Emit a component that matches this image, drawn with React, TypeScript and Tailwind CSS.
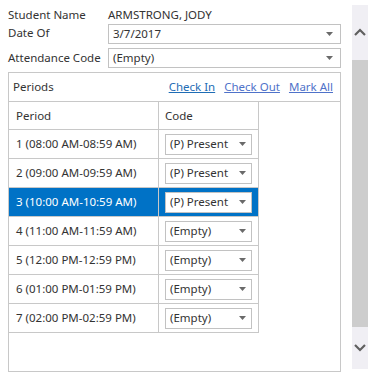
import React from "react";

const Arrow = () => (
  <svg width="7" height="4" viewBox="0 0 7 4" className="shrink-0">
    <path d="M0 0H7L3.5 4Z" fill="#6a6a6a" />
  </svg>
);

const Select = ({ value }: { value: string }) => (
  <div className="flex h-[21px] w-[87px] items-center justify-between border border-[#c2c2c2] bg-white pl-[4px] pr-[5px] text-[#333]">
    <span>{value}</span>
    <Arrow />
  </div>
);

const rows = [
  ["1 (08:00 AM-08:59 AM)", "(P) Present"],
  ["2 (09:00 AM-09:59 AM)", "(P) Present"],
  ["3 (10:00 AM-10:59 AM)", "(P) Present"],
  ["4 (11:00 AM-11:59 AM)", "(Empty)"],
  ["5 (12:00 PM-12:59 PM)", "(Empty)"],
  ["6 (01:00 PM-01:59 PM)", "(Empty)"],
  ["7 (02:00 PM-02:59 PM)", "(Empty)"],
];

export default function App() {
  return (
    <div
      className="flex h-[375px] w-[368px] overflow-hidden bg-white text-[11.5px] text-[#333]"
      style={{ fontFamily: '"Noto Sans", "Open Sans", sans-serif' }}
    >
      <div className="flex w-[352px] flex-col pl-[8px] pt-[5px]">
        <div className="flex h-[19px] items-center">
          <div className="w-[100px]">Student Name</div>
          <div>ARMSTRONG, JODY</div>
        </div>
        <div className="flex h-[20px] items-center">
          <div className="w-[100px] self-start leading-[17px]">Date Of</div>
          <div className="flex h-[20px] w-[233px] items-center justify-between border border-[#c2c2c2] pl-[4px] pr-[7px]">
            <span>3/7/2017</span>
            <Arrow />
          </div>
        </div>
        <div className="mt-[4px] flex h-[20px] items-center">
          <div className="w-[100px]">Attendance Code</div>
          <div className="flex h-[20px] w-[233px] items-center justify-between border border-[#c2c2c2] pl-[4px] pr-[7px]">
            <span>(Empty)</span>
            <Arrow />
          </div>
        </div>
        <div className="mt-[4px] flex h-[300px] w-[333px] flex-col border border-[#c8c8c8]">
          <div className="flex h-[29px] items-center justify-between border-b border-[#c8c8c8] pl-[4px] pr-[7px]">
            <span>Periods</span>
            <div className="flex gap-[9px]">
              <span className="text-[#1f6db5] underline">Check In</span>
              <span className="text-[#4f72c9] underline">Check Out</span>
              <span className="text-[#4f72c9] underline">Mark All</span>
            </div>
          </div>
          <div className="w-[250px]">
            <div className="flex h-[28px] border-b border-r border-[#c8c8c8]">
              <div className="flex w-[150px] items-center border-r border-[#c8c8c8] pl-[7px]">Period</div>
              <div className="flex items-center pl-[6px]">Code</div>
            </div>
            {rows.map(([p, c], i) => {
              const sel = i === 2;
              return (
                <div
                  key={p}
                  className={
                    sel
                      ? "flex h-[29px] border-b border-r border-[#c8c8c8] bg-[#0072c6] text-white"
                      : "flex h-[29px] border-b border-r border-[#c8c8c8]"
                  }
                >
                  <div className="flex w-[150px] items-center border-r border-[#c8c8c8] pl-[7px]">{p}</div>
                  <div className="flex items-center pl-[6px]">
                    <Select value={c} />
                  </div>
                </div>
              );
            })}
          </div>
        </div>
      </div>
      <div className="mt-[5px] flex h-[364px] w-[16px] flex-col items-center bg-[#f0eff4]">
        <div className="flex h-[55px] w-full items-center justify-center pb-[2px]">
          <svg width="12" height="8" viewBox="0 0 12 8">
            <path d="M1 7L6 2L11 7" fill="none" stroke="#606060" strokeWidth="2.2" />
          </svg>
        </div>
        <div className="h-[267px] w-full bg-[#cdcdcd]" />
        <div className="flex flex-1 w-full items-center justify-center">
          <svg width="12" height="8" viewBox="0 0 12 8">
            <path d="M1 1L6 6L11 1" fill="none" stroke="#606060" strokeWidth="2.2" />
          </svg>
        </div>
      </div>
    </div>
  );
}
